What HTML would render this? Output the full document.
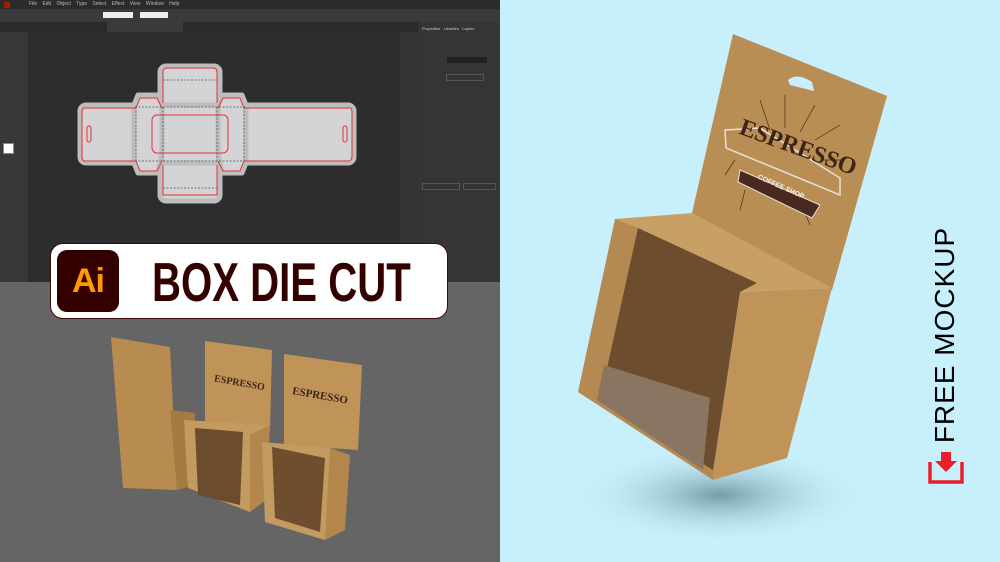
<!DOCTYPE html>
<html><head><meta charset="utf-8"><style>
*{margin:0;padding:0;box-sizing:border-box}
body{width:1000px;height:562px;overflow:hidden;position:relative;font-family:"Liberation Sans",sans-serif;background:#c8f0fc}
.abs{position:absolute}
</style></head><body>
<div class="abs" style="left:0;top:0;width:500px;height:282px;background:#323232"></div>
<div class="abs" style="left:0;top:0;width:500px;height:9px;background:#2b2b2b"></div>
<div class="abs" style="left:4px;top:2px;width:6px;height:6px;background:#a31f00"></div>
<div class="abs" style="left:29px;top:1px;font-size:5px;color:#bbb;word-spacing:4px">File Edit Object Type Select Effect View Window Help</div>
<div class="abs" style="left:0;top:9px;width:500px;height:13px;background:#3a3a3a"></div>
<div class="abs" style="left:103px;top:12px;width:30px;height:6px;background:#eee"></div>
<div class="abs" style="left:140px;top:12px;width:28px;height:6px;background:#eee"></div>
<div class="abs" style="left:0;top:22px;width:500px;height:10px;background:#2a2a2a"></div>
<div class="abs" style="left:107px;top:22px;width:76px;height:10px;background:#3b3b3b"></div>
<div class="abs" style="left:0;top:32px;width:28px;height:250px;background:#383838"></div>
<div class="abs" style="left:3px;top:143px;width:11px;height:11px;background:#fff;border:1px solid #888"></div>
<div class="abs" style="left:28px;top:32px;width:372px;height:250px;background:#2d2d2d"></div>
<div class="abs" style="left:400px;top:32px;width:18px;height:250px;background:#333"></div>
<div class="abs" style="left:418px;top:22px;width:82px;height:260px;background:#353535"></div>
<div class="abs" style="left:422px;top:26px;font-size:4px;color:#ccc">Properties &nbsp; Libraries &nbsp; Layers</div>
<div class="abs" style="left:447px;top:57px;width:40px;height:6px;background:#222"></div>
<div class="abs" style="left:446px;top:74px;width:38px;height:7px;border:1px solid #555"></div>
<div class="abs" style="left:422px;top:183px;width:38px;height:7px;border:1px solid #555"></div>
<div class="abs" style="left:463px;top:183px;width:33px;height:7px;border:1px solid #555"></div>
<svg class="abs" style="left:0;top:0" width="500" height="282">
<g fill="#d4d4d6" stroke="#bdbdbd" stroke-width="5" stroke-linejoin="round">
<rect x="160" y="66" width="60" height="135" rx="6"/>
<rect x="80" y="105" width="274" height="58" rx="6"/>
<path d="M134 105 L138 95 H158 L162 105 V153 L158 173 H138 L134 163Z"/>
<path d="M246 105 L242 95 H222 L218 105 V153 L222 173 H242 L246 163Z"/>
</g>
<g fill="none" stroke="#e8303a" stroke-width="1">
<path d="M163 103 V72 Q163 68 167 68 H213 Q217 68 217 72 V103"/>
<path d="M163 165 V195 H217 V165"/>
<path d="M83 108 H136 L140 98 H157 L162 108 M218 108 L223 98 H240 L244 108 H350 Q352 108 352 112 V156 Q352 161 348 161 H244 L240 171 H223 L218 161 M162 161 L157 171 H140 L136 161 H85 Q82 161 82 157 V112 Q82 108 85 108"/>
<rect x="152" y="115" width="76" height="38" rx="5"/>
<rect x="87" y="126" width="4" height="16" rx="2"/>
<rect x="343" y="126" width="4" height="16" rx="2"/>
</g>
<g fill="none" stroke="#555" stroke-width="0.8" stroke-dasharray="2 1.5">
<path d="M163 80 H217 M163 188 H217 M135 107 H245 M135 161 H245 M136 107 V161 M244 107 V161 M163 107 V161 M217 107 V161"/>
</g>
</svg>
<div class="abs" style="left:0;top:282px;width:500px;height:280px;background:#656565"></div>
<svg class="abs" style="left:0;top:0" width="500" height="562">
<polygon points="111,337 170,347 177,490 123,488" fill="#b88c51"/>
<polygon points="170,410 195,413 195,485 177,490" fill="#a67b43"/>
<polygon points="205,341 272,350 270,430 205,430" fill="#c09459"/>
<polygon points="184,420 270,425 262,500 250,512 188,488" fill="#c39a5f"/>
<polygon points="195,428 243,432 240,505 198,495" fill="#6b4c2c"/>
<polygon points="250,435 270,425 266,500 250,512" fill="#b3874c"/>
<polygon points="284,354 362,365 358,450 284,445" fill="#c09459"/>
<polygon points="262,442 330,448 345,455 340,530 325,540 265,522" fill="#c39a5f"/>
<polygon points="272,447 325,458 320,532 275,518" fill="#6e4e2e"/>
<polygon points="330,448 350,455 345,530 325,540" fill="#b3874c"/>
<g fill="#3e2418" font-family="Liberation Serif" font-weight="bold">
<text x="214" y="385" font-size="10" transform="rotate(10 235 382)">ESPRESSO</text>
<text x="292" y="398" font-size="11" transform="rotate(10 315 395)">ESPRESSO</text>
</g>
</svg>
<div class="abs" style="left:50px;top:243px;width:398px;height:76px;background:#fff;border:1.5px solid #3a0a0a;border-radius:13px"></div>
<div class="abs" style="left:57px;top:250px;width:62px;height:62px;background:#330000;border-radius:10px;color:#ff9a00;font-weight:bold;font-size:34px;line-height:62px;text-align:center;letter-spacing:-1px">Ai</div>
<div class="abs" style="left:152px;top:252px;font-size:55px;font-weight:bold;color:#330000;line-height:60px;transform:scaleX(0.73);transform-origin:left;white-space:nowrap">BOX DIE CUT</div>
<svg class="abs" style="left:500px;top:0" width="500" height="562">
<defs><radialGradient id="sh"><stop offset="0" stop-color="#5f8894" stop-opacity=".8"/><stop offset="1" stop-color="#c8f0fc" stop-opacity="0"/></radialGradient></defs>
<ellipse cx="220" cy="495" rx="150" ry="50" fill="url(#sh)"/>
<polygon points="233,34 387,96 332,290 192,213" fill="#b98e55"/>
<path d="M288 80 Q297 72 312 82 L314 91 L290 85Z" fill="#c8f0fc"/>
<g stroke="#4a2a20" stroke-width="0.7">
<path d="M270 130 L260 100 M285 128 L285 95 M300 132 L315 105 M315 140 L340 125 M320 160 L345 160 M235 160 L225 175 M245 190 L240 210 M300 200 L310 225"/>
</g>
<path d="M225 130 L260 128 L340 178 L340 195 L226 148Z" fill="none" stroke="#e6e0d8" stroke-width="1.5"/>
<g fill="#3e2418" font-family="Liberation Serif" font-weight="bold">
<text x="228" y="150" font-size="24" transform="rotate(20 280 170)">ESPRESSO</text>
</g>
<path d="M240 170 L320 205 L312 218 L238 182Z" fill="#4a2a20" stroke="#e6e0d8" stroke-width="1"/>
<text x="252" y="187" font-size="7" fill="#eee" font-weight="bold" transform="rotate(24 275 195)">COFFEE SHOP</text>
<polygon points="115,219 192,213 332,288 240,292" fill="#c8a066"/>
<polygon points="115,219 78,392 213,480 240,292 138,228" fill="#b58a52"/>
<polygon points="138,228 257,283 240,292 213,470 100,400" fill="#6c4d2e"/>
<polygon points="104,365 210,398 203,470 97,400" fill="#8a7462"/>
<polygon points="240,292 332,288 287,458 213,480" fill="#c09459"/>
</svg>
<div class="abs" style="left:945px;top:335px;transform:translate(-50%,-50%) rotate(-90deg);font-size:28px;color:#000;white-space:nowrap;letter-spacing:1px">FREE MOCKUP</div>
<svg class="abs" style="left:928px;top:452px" width="36" height="32">
<path d="M2 10 V30 H34 V10" fill="none" stroke="#e8202a" stroke-width="3.5"/>
<path d="M13 0 H23 V9 H29 L18 20 L7 9 H13Z" fill="#e8202a"/>
</svg>
</body></html>
